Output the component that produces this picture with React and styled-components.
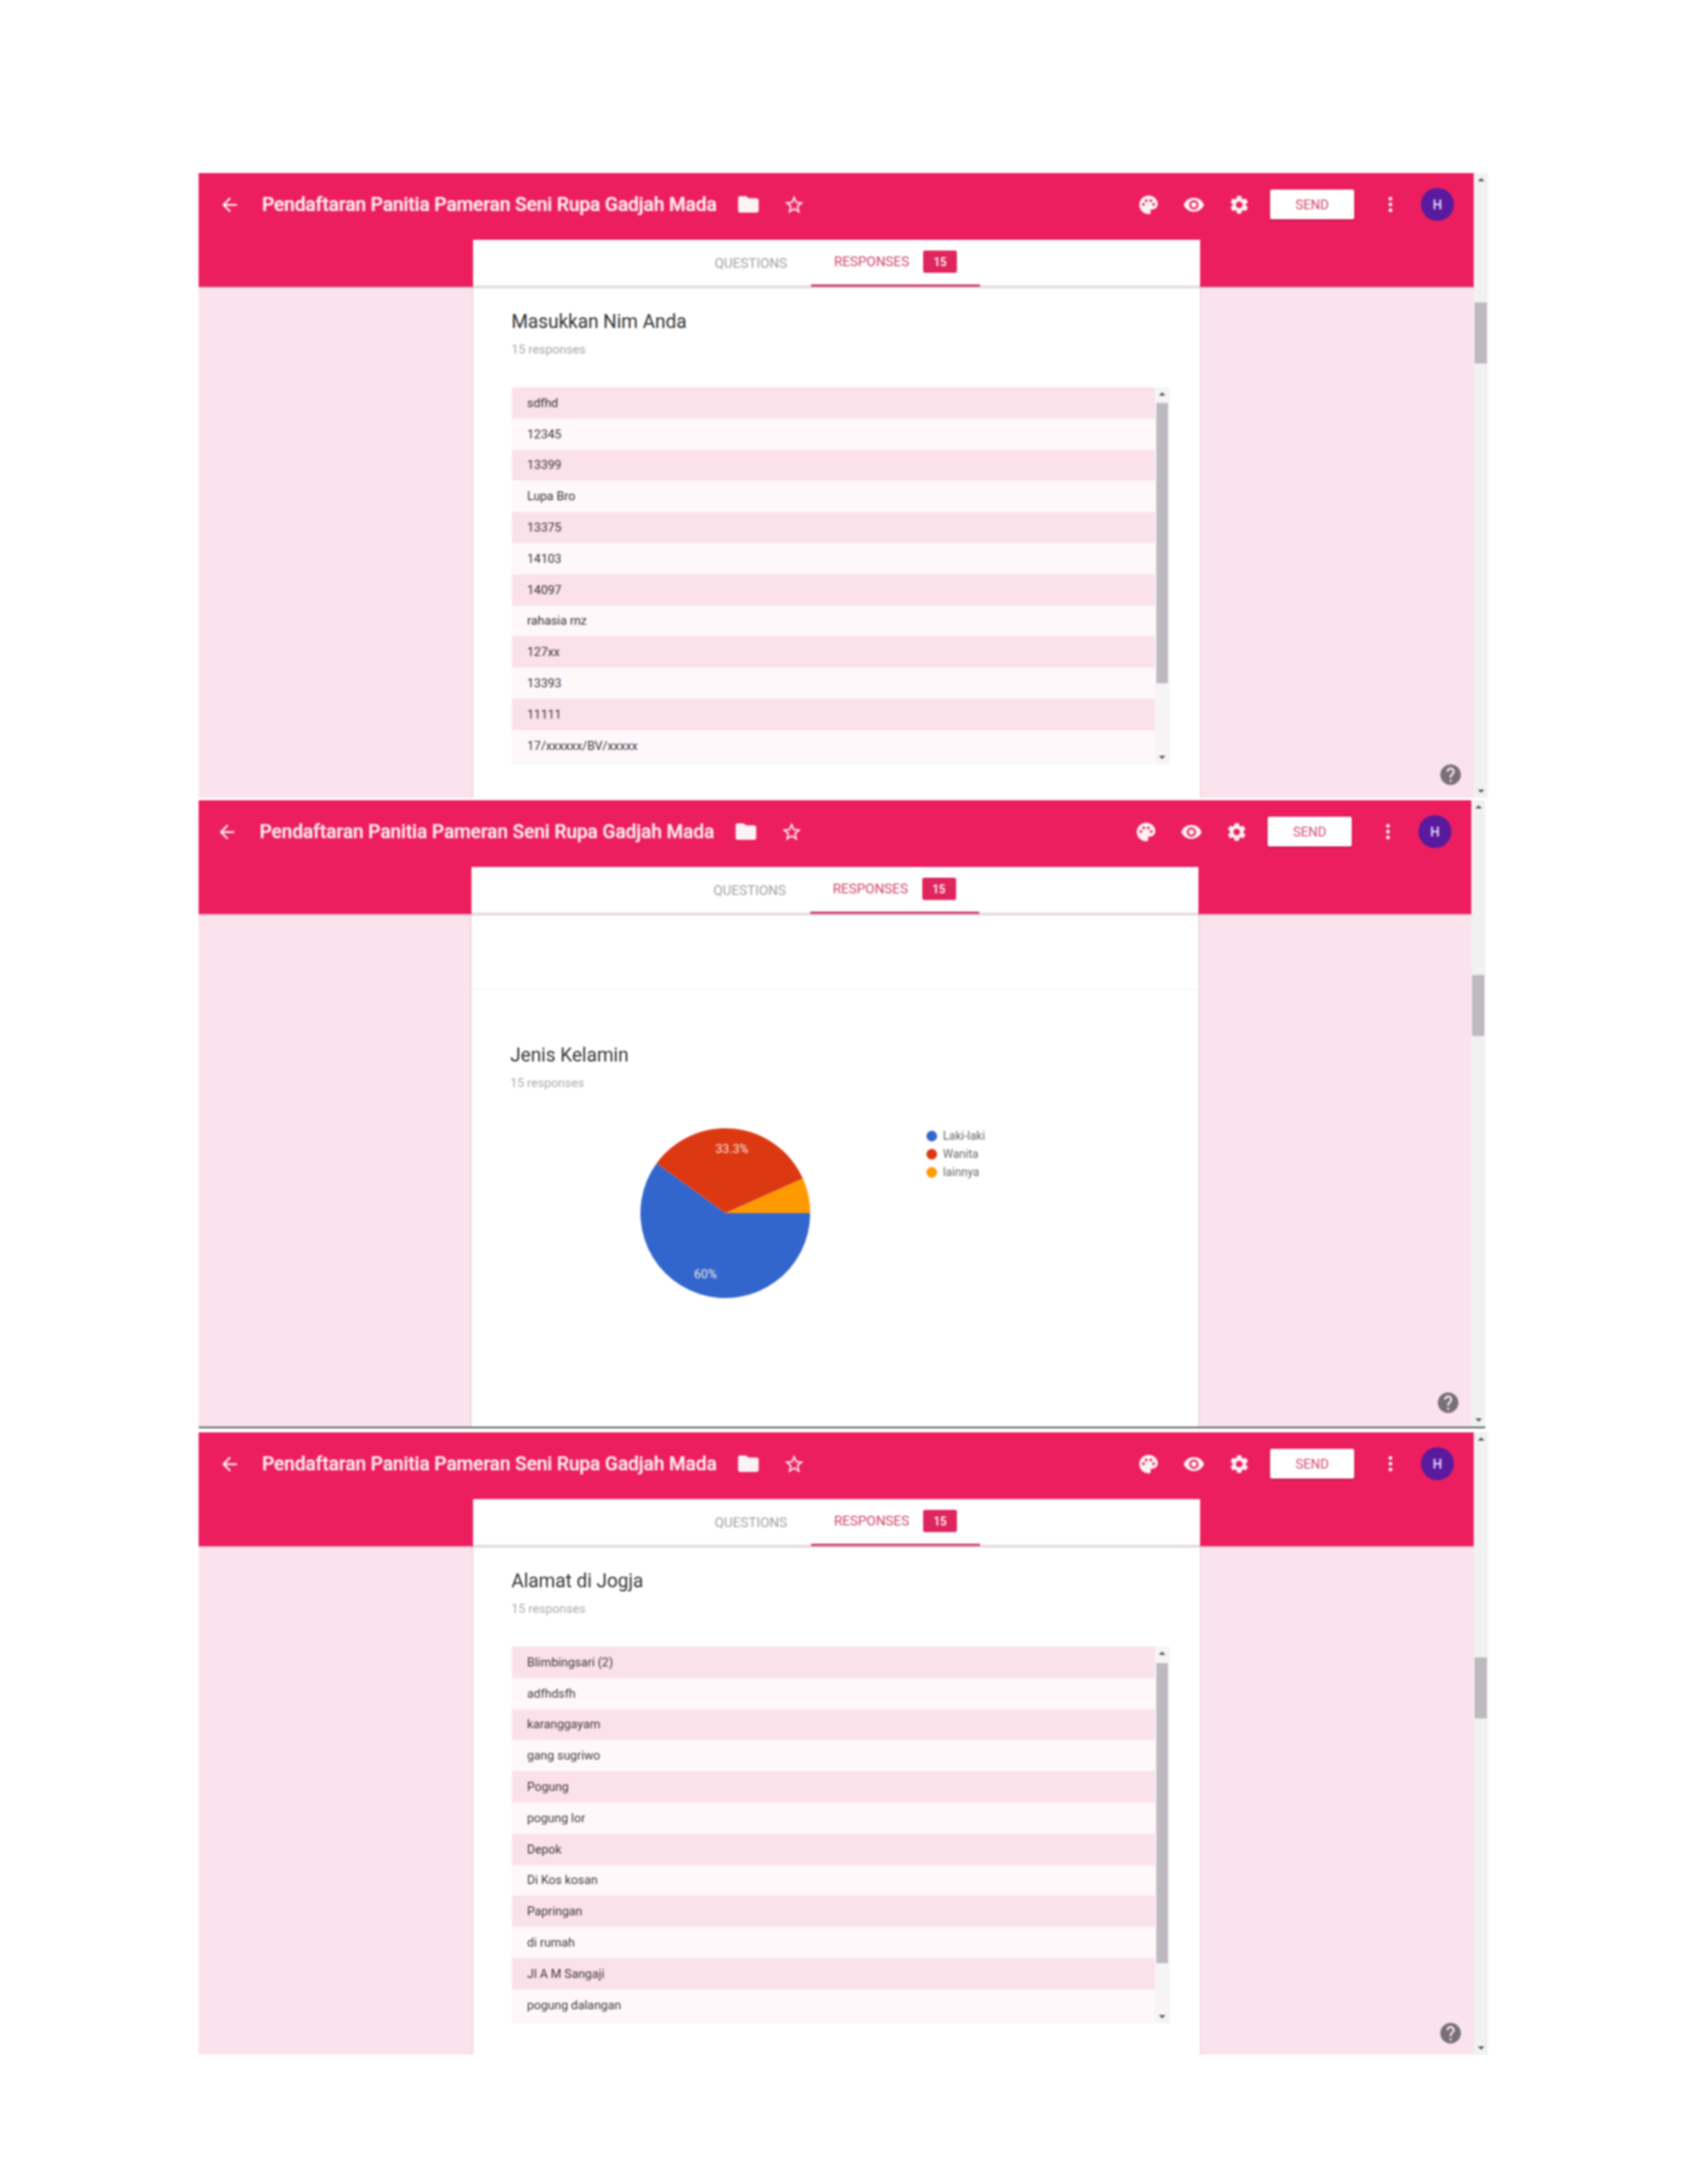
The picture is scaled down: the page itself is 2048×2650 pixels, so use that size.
import React from "react";
import styled, { createGlobalStyle } from "styled-components";
import { MdArrowBack, MdFolder, MdStarBorder, MdPalette, MdRemoveRedEye, MdSettings, MdMoreVert, MdHelp } from "react-icons/md";

const Global = createGlobalStyle`
  html, body { margin: 0; padding: 0; background: #fff; }
  body { font-family: Roboto, "Liberation Sans", sans-serif; }
`;

const Page = styled.div`
  width: 2048px;
  height: 2650px;
  padding-top: 210px;
  box-sizing: border-box;
  display: flex;
  flex-direction: column;
  filter: blur(1.1px);
`;

const Shot = styled.section`
  width: ${(p) => p.$width}px;
  height: ${(p) => p.$height}px;
  margin-left: 241px;
  margin-bottom: ${(p) => p.$gap}px;
  display: flex;
  position: relative;
  border-bottom: ${(p) => (p.$rule ? "2px solid #5c6060" : "none")};
`;

const Main = styled.div`
  flex: 1;
  min-width: 0;
  background: #fae3ec;
  display: flex;
  flex-direction: column;
  align-items: center;
  overflow: hidden;
`;

const Header = styled.header`
  align-self: stretch;
  background: #ec1e5f;
  height: 138px;
  flex: none;
  display: flex;
  flex-direction: column;
  align-items: center;
  box-shadow: 0 1px 2px rgba(120, 20, 60, 0.3);
  position: relative;
`;

const TopBar = styled.div`
  align-self: stretch;
  height: 81px;
  flex: none;
  padding: 0 24px 5px ${(p) => p.$pad}px;
  box-sizing: border-box;
  display: flex;
  align-items: center;
  color: #fdf2f6;
`;

const BackIcon = styled(MdArrowBack)`
  font-size: 27px;
  margin-right: 26px;
  flex: none;
`;

const Title = styled.h1`
  margin: 0;
  font: 500 23px/1 Roboto, sans-serif;
  color: #fdeef3;
  white-space: nowrap;
  text-shadow: 0 0 1px rgba(255, 255, 255, 0.8);
`;

const BarIcon = styled.span`
  display: flex;
  font-size: ${(p) => p.$size || 27}px;
  margin-left: ${(p) => p.$left}px;
  color: #fdf2f6;
`;

const Spacer = styled.div`
  flex: 1;
`;

const SendButton = styled.button`
  width: 102px;
  height: 36px;
  margin-left: 24px;
  border: 0;
  border-radius: 2px;
  background: #fff;
  color: #d2486f;
  font: 400 16px Roboto, sans-serif;
  box-shadow: 0 1px 3px rgba(0, 0, 0, 0.3);
`;

const Avatar = styled.div`
  width: 40px;
  height: 40px;
  margin-left: 23px;
  border-radius: 50%;
  background: #5a1a9e;
  color: #e9dcff;
  display: flex;
  align-items: center;
  justify-content: center;
  font: 500 16px Roboto, sans-serif;
`;

const Tabs = styled.nav`
  width: ${(p) => p.$card}px;
  height: 57px;
  flex: none;
  background: #fff;
  border-bottom: 2px solid #e6e6e6;
  box-sizing: border-box;
  display: flex;
  justify-content: center;
  padding-right: 2px;
`;

const Tab = styled.div`
  width: ${(p) => p.$w}px;
  height: 57px;
  flex: none;
  box-sizing: border-box;
  display: flex;
  align-items: center;
  justify-content: center;
  gap: 17px;
  padding-bottom: 1px;
  font: 400 16.4px Roboto, sans-serif;
  color: ${(p) => (p.$active ? "#d2486f" : "#a3a3a3")};
  border-bottom: ${(p) => (p.$active ? "3px solid #d2486f" : "none")};
`;

const Badge = styled.span`
  width: 41px;
  height: 27px;
  background: #e0245e;
  color: #fff;
  border-radius: 2px;
  display: flex;
  align-items: center;
  justify-content: center;
  font: 500 14px Roboto, sans-serif;
`;

const Card = styled.main`
  width: ${(p) => p.$card}px;
  flex: 1;
  min-height: 0;
  background: #fff;
  box-shadow: 0 0 2px rgba(120, 100, 110, 0.5);
  box-sizing: border-box;
  padding: ${(p) => p.$top}px 39px 0 47px;
  display: flex;
  flex-direction: column;
  overflow: hidden;
`;

const Divider = styled.div`
  height: 1px;
  margin: 0 -39px 66px -47px;
  background: #f5f3f4;
`;

const Question = styled.h2`
  margin: 0;
  font: 400 23px/28px Roboto, sans-serif;
  color: #333;
`;

const Count = styled.p`
  margin: 11px 0 0;
  font: 400 15px/16px Roboto, sans-serif;
  color: #aaa;
`;

const ListBox = styled.div`
  width: 798px;
  height: 457px;
  margin-top: 38px;
  flex: none;
  display: flex;
  background: #f8f6f7;
`;

const Rows = styled.div`
  flex: 1;
  display: flex;
  flex-direction: column;
`;

const Row = styled.div`
  height: 37.8px;
  flex: none;
  padding-left: 19px;
  display: flex;
  align-items: center;
  font: 400 14.8px Roboto, sans-serif;
  color: #3d373b;
  background: ${(p) => (p.$odd ? "#fbe1e9" : "#fef8fb")};
`;

const Track = styled.div`
  width: ${(p) => p.$w}px;
  flex: none;
  background: ${(p) => p.$bg};
  display: flex;
  flex-direction: column;
  align-items: center;
`;

const Thumb = styled.div`
  width: ${(p) => p.$w}px;
  height: ${(p) => p.$h}px;
  margin-top: ${(p) => p.$top}px;
  flex: none;
  background: #bdb9be;
`;

const Arrow = styled.div`
  width: 0;
  height: 0;
  flex: none;
  margin-top: ${(p) => (p.$end ? "auto" : "6px")};
  margin-bottom: ${(p) => (p.$end ? "6px" : "0")};
  border-left: 4px solid transparent;
  border-right: 4px solid transparent;
  border-bottom: ${(p) => (p.$end ? "0" : "4px solid #555")};
  border-top: ${(p) => (p.$end ? "4px solid #555" : "0")};
`;

const Help = styled(MdHelp)`
  position: absolute;
  right: 30px;
  bottom: ${(p) => p.$bottom}px;
  font-size: 30px;
  color: #777074;
`;

const ChartRow = styled.div`
  margin-top: 0;
  display: flex;
  align-items: flex-start;
`;

const PieSvg = styled.svg`
  width: 300px;
  height: 300px;
  flex: none;
  margin-left: 111px;
`;

const PieLabel = styled.text`
  font: 400 15px Roboto, sans-serif;
  fill: #fbeee6;
  text-anchor: middle;
`;

const Legend = styled.ul`
  list-style: none;
  margin: 47px 0 0 94px;
  padding: 0;
  display: flex;
  flex-direction: column;
  gap: 4px;
`;

const LegendItem = styled.li`
  height: 18px;
  display: flex;
  align-items: center;
  gap: 7px;
  font: 400 14px Roboto, sans-serif;
  color: #666;
  &::before {
    content: "";
    width: 13px;
    height: 13px;
    border-radius: 50%;
    background: ${(p) => p.$color};
  }
`;

const nim = ["sdfhd", "12345", "13399", "Lupa Bro", "13375", "14103", "14097", "rahasia rnz", "127xx", "13393", "11111", "17/xxxxxx/BV/xxxxx"];
const alamat = ["Blimbingsari (2)", "adfhdsfh", "karanggayam", "gang sugriwo", "Pogung", "pogung lor", "Depok", "Di Kos kosan", "Papringan", "di rumah", "Jl A M Sangaji", "pogung dalangan"];

function Bar({ pad }) {
  return (
    <TopBar $pad={pad}>
      <BackIcon />
      <Title>Pendaftaran Panitia Pameran Seni Rupa Gadjah Mada</Title>
      <BarIcon $left={23} $size={30}><MdFolder /></BarIcon>
      <BarIcon $left={27}><MdStarBorder /></BarIcon>
      <Spacer />
      <BarIcon><MdPalette /></BarIcon>
      <BarIcon $left={28}><MdRemoveRedEye /></BarIcon>
      <BarIcon $left={28}><MdSettings /></BarIcon>
      <SendButton>SEND</SendButton>
      <BarIcon $left={30} $size={28}><MdMoreVert /></BarIcon>
      <Avatar>H</Avatar>
    </TopBar>
  );
}

function Frame({ card, children, top, width, height, gap, rule, thumbTop, pad, helpBottom }) {
  return (
    <Shot $width={width} $height={height} $gap={gap} $rule={rule}>
      <Main>
        <Header>
          <Bar pad={pad} />
          <Tabs $card={card}>
            <Tab $w={146}>QUESTIONS</Tab>
            <Tab $w={205} $active>RESPONSES<Badge>15</Badge></Tab>
          </Tabs>
        </Header>
        <Card $card={card} $top={top}>{children}</Card>
      </Main>
      <Track $w={17} $bg="#f1f1f1">
        <Arrow />
        <Thumb $w={15} $h={74} $top={thumbTop} />
        <Arrow $end />
      </Track>
      <Help $bottom={helpBottom} />
    </Shot>
  );
}

function AnswerList({ items, thumbTop, thumbH }) {
  return (
    <ListBox>
      <Rows>
        {items.map((t, i) => (
          <Row key={t} $odd={i % 2 === 0}>{t}</Row>
        ))}
      </Rows>
      <Track $w={18} $bg="#f6f4f5">
        <Arrow />
        <Thumb $w={14} $h={thumbH} $top={thumbTop} />
        <Arrow $end />
      </Track>
    </ListBox>
  );
}

function Pie() {
  const slice = (a, b, c) => {
    const R = 103;
    const p = (d) => [150 + R * Math.cos((d * Math.PI) / 180), 150 + R * Math.sin((d * Math.PI) / 180)];
    const [x1, y1] = p(a);
    const [x2, y2] = p(b);
    return <path d={`M150 150L${x1} ${y1}A${R} ${R} 0 ${b - a > 180 ? 1 : 0} 1 ${x2} ${y2}Z`} fill={c} />;
  };
  return (
    <PieSvg viewBox="0 0 300 300">
      {slice(0, 216, "#3366cc")}
      {slice(216, 336, "#dc3912")}
      {slice(336, 360, "#ff9900")}
      <PieLabel x="158" y="77">33.3%</PieLabel>
      <PieLabel x="126" y="229">60%</PieLabel>
    </PieSvg>
  );
}

export default function App() {
  return (
    <Page>
      <Global />
      <Frame card={882} top={29} width={1564} height={758} gap={3} thumbTop={147} pad={24} helpBottom={13}>
        <Question>Masukkan Nim Anda</Question>
        <Count>15 responses</Count>
        <AnswerList items={nim} thumbTop={9} thumbH={340} />
      </Frame>
      <Frame card={882} top={91} width={1561} height={760} gap={5} rule thumbTop={202} pad={21} helpBottom={14}>
        <Divider />
        <Question>Jenis Kelamin</Question>
        <Count>15 responses</Count>
        <ChartRow>
          <Pie />
          <Legend>
            <LegendItem $color="#3366cc">Laki-laki</LegendItem>
            <LegendItem $color="#dc3912">Wanita</LegendItem>
            <LegendItem $color="#ff9900">lainnya</LegendItem>
          </Legend>
        </ChartRow>
      </Frame>
      <Frame card={882} top={29} width={1564} height={755} gap={0} thumbTop={263} pad={24} helpBottom={11}>
        <Question>Alamat di Jogja</Question>
        <Count>15 responses</Count>
        <AnswerList items={alamat} thumbTop={10} thumbH={364} />
      </Frame>
    </Page>
  );
}
